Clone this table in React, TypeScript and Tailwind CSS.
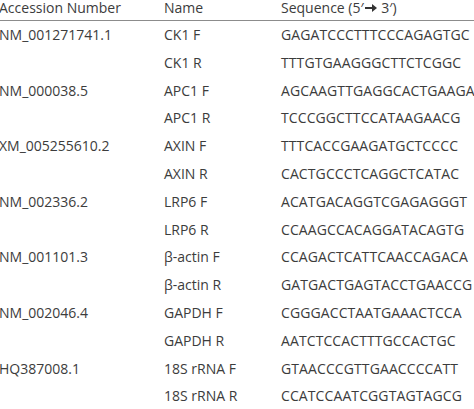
const rows: [string, string, string][] = [
  ['NM_001271741.1', 'CK1 F', 'GAGATCCCTTTCCCAGAGTGC'],
  ['', 'CK1 R', 'TTTGTGAAGGGCTTCTCGGC'],
  ['NM_000038.5', 'APC1 F', 'AGCAAGTTGAGGCACTGAAGA'],
  ['', 'APC1 R', 'TCCCGGCTTCCATAAGAACG'],
  ['XM_005255610.2', 'AXIN F', 'TTTCACCGAAGATGCTCCCC'],
  ['', 'AXIN R', 'CACTGCCCTCAGGCTCATAC'],
  ['NM_002336.2', 'LRP6 F', 'ACATGACAGGTCGAGAGGGT'],
  ['', 'LRP6 R', 'CCAAGCCACAGGATACAGTG'],
  ['NM_001101.3', 'β-actin F', 'CCAGACTCATTCAACCAGACA'],
  ['', 'β-actin R', 'GATGACTGAGTACCTGAACCG'],
  ['NM_002046.4', 'GAPDH F', 'CGGGACCTAATGAAACTCCA'],
  ['', 'GAPDH R', 'AATCTCCACTTTGCCACTGC'],
  ['HQ387008.1', '18S rRNA F', 'GTAACCCGTTGAACCCCATT'],
  ['', '18S rRNA R', 'CCATCCAATCGGTAGTAGCG'],
];

export default function App() {
  return (
    <div className="w-[474px] h-[409px] overflow-hidden bg-white text-[#3c3c3c] text-[14px] font-['Open_Sans',sans-serif]">
      <div className="grid grid-cols-[165px_117px_1fr] h-[21px] leading-[16px] border-b border-[#8c8c8c] -ml-[1px]">
        <div>Accession Number</div>
        <div>Name</div>
        <div className="flex items-start">
          <span>Sequence (5′</span>
          <svg width="12" height="10" viewBox="0 0 12 10" className="mt-[3px] mx-[1px]">
            <path d="M0 4h7V1l5 4-5 4V6H0z" fill="#333" />
          </svg>
          <span>&nbsp;3′)</span>
        </div>
      </div>
      {rows.map(([acc, name, seq], i) => (
        <div key={i} className="grid grid-cols-[165px_117px_1fr] leading-[27.8px] -ml-[1px]">
          <div>{acc}</div>
          <div>{name}</div>
          <div className="tracking-[0.1px]">{seq}</div>
        </div>
      ))}
    </div>
  );
}
